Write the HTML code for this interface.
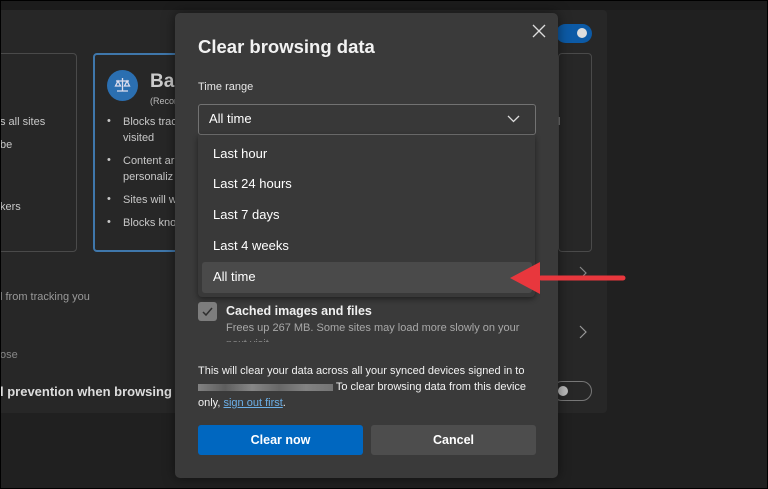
<!DOCTYPE html>
<html><head><meta charset="utf-8"><style>
*{margin:0;padding:0;box-sizing:border-box}
body{width:768px;height:489px;overflow:hidden;background:#202020;font-family:"Liberation Sans",sans-serif;position:relative;color:#fff}
.a{position:absolute;white-space:nowrap}
.frame{position:absolute;left:0;top:0;width:768px;height:489px;border:1px solid #000;pointer-events:none}
.card{position:absolute;left:0;top:10px;width:607px;height:403px;background:#272727;border-radius:0 4px 4px 0}
.g{color:#bdbdbd;font-size:11px}
.li{color:#c8c8c8;font-size:11px}
.dlg{position:absolute;left:175px;top:13px;width:383px;height:465px;background:#3a3a3a;border-radius:5px;box-shadow:0 0 12px rgba(0,0,0,.5)}
.item{position:absolute;left:15px;font-size:13px;color:#fff}
</style></head><body>
<div class="a" style="left:0;top:0;width:768px;height:10px;background:#1c1c1c"></div>
<div class="card"></div>
<div class="a" style="left:556px;top:24px;width:36px;height:19px;border-radius:10px;background:#0c5aa6"></div>
<div class="a" style="left:577px;top:28px;width:10px;height:10px;border-radius:50%;background:#ddd"></div>
<div class="a" style="left:-5px;top:53px;width:82px;height:199px;border:1px solid #4a4a4a;border-radius:4px"></div>
<div class="a" style="left:93px;top:53px;width:100px;height:199px;border:2px solid #3f77ab;border-radius:4px"></div>
<div class="a" style="left:558px;top:53px;width:34px;height:199px;border:1px solid #4a4a4a;border-radius:4px"></div>
<div class="a" style="left:107px;top:70px;width:31px;height:31px;border-radius:50%;background:#2b6fb1"></div>
<svg class="a" style="left:113px;top:76px" width="19" height="19" viewBox="0 0 19 19" fill="none" stroke="#dde" stroke-width="1.3"><path d="M9.5 2v13M4 15h11M3 5h13M5 5l-2.5 5h5zM14 5l-2.5 5h5z"/></svg>
<div class="a" style="left:150px;top:71px;font-size:19px;font-weight:bold;color:#ccc">Bal</div>
<div class="a" style="left:150px;top:96px;font-size:9px;color:#bbb">(Recor</div>
<div class="a li" style="left:107px;top:115px">•</div><div class="a li" style="left:123px;top:116px">Blocks trac</div>
<div class="a li" style="left:123px;top:132px">visited</div>
<div class="a li" style="left:107px;top:154px">•</div><div class="a li" style="left:123px;top:155px">Content ar</div>
<div class="a li" style="left:123px;top:171px">personaliz</div>
<div class="a li" style="left:107px;top:193px">•</div><div class="a li" style="left:123px;top:194px">Sites will w</div>
<div class="a li" style="left:107px;top:216px">•</div><div class="a li" style="left:123px;top:217px">Blocks kno</div>
<div class="a li" style="left:0;top:116px">s all sites</div>
<div class="a li" style="left:0;top:139px">be</div>
<div class="a li" style="left:0;top:201px">kers</div>
<div class="a li" style="left:558px;top:116px;color:#888">l</div>
<div class="a g" style="left:0;top:291px;color:#999">l from tracking you</div>
<div class="a g" style="left:0;top:349px;color:#888">ose</div>
<div class="a" style="left:0;top:384px;font-size:13px;font-weight:bold;color:#ddd">l prevention when browsing I</div>
<svg class="a" style="left:578px;top:266px" width="10" height="14"><path d="M2 1l6 6-6 6" stroke="#888" fill="none" stroke-width="1.2"/></svg>
<svg class="a" style="left:578px;top:325px" width="10" height="14"><path d="M2 1l6 6-6 6" stroke="#999" fill="none" stroke-width="1.2"/></svg>
<div class="a" style="left:552px;top:381px;width:40px;height:20px;border-radius:10px;border:1px solid #777"></div>
<div class="a" style="left:558px;top:386px;width:10px;height:10px;border-radius:50%;background:#bbb"></div>

<div class="dlg">
 <div class="a" style="left:23px;top:23px;font-size:18.5px;font-weight:bold;color:#f2f2f2">Clear browsing data</div>
 <svg class="a" style="left:357px;top:11px" width="14" height="14"><path d="M1 1l12 12M13 1L1 13" stroke="#ddd" stroke-width="1.3"/></svg>
 <div class="a" style="left:23px;top:68px;font-size:11px;color:#e6e6e6">Time range</div>
 <div class="a" style="left:23px;top:91px;width:338px;height:31px;border:1px solid #727272;border-radius:3px;background:#383838"></div>
 <div class="a" style="left:34px;top:98px;font-size:13px">All time</div>
 <svg class="a" style="left:332px;top:101px" width="13" height="9"><path d="M1 2l5.5 5.5L12 2" stroke="#ddd" fill="none" stroke-width="1.3"/></svg>
 <div class="a" style="left:23px;top:122px;width:337px;height:162px;background:#393939;box-shadow:0 2px 6px rgba(0,0,0,.45);border-radius:0 0 4px 4px">
  <div class="item" style="top:11px">Last hour</div>
  <div class="item" style="top:41px">Last 24 hours</div>
  <div class="item" style="top:72px">Last 7 days</div>
  <div class="item" style="top:103px">Last 4 weeks</div>
  <div class="a" style="left:4px;top:127px;width:330px;height:31px;background:#4a4a4a;border-radius:3px"></div>
  <div class="item" style="top:134px">All time</div>
 </div>
 <div class="a" style="left:23px;top:289px;width:19px;height:19px;border-radius:3px;background:#7d7d7d"></div>
 <svg class="a" style="left:25px;top:291px" width="15" height="15"><path d="M3 8l3 3 6-7" stroke="#2e2e2e" fill="none" stroke-width="1.5"/></svg>
 <div class="a" style="left:51px;top:291px;font-size:12.5px;font-weight:bold;color:#f0f0f0">Cached images and files</div>
 <div class="a" style="left:51px;top:309px;font-size:11px;color:#a8a8a8">Frees up 267 MB. Some sites may load more slowly on your</div>
 <div class="a" style="left:51px;top:326px;width:200px;height:3px;overflow:hidden"><div style="margin-top:-1px;font-size:11px;line-height:13px;color:#888">next visit</div></div>
 <div class="a" style="left:23px;top:350px;font-size:11px;line-height:16px;color:#f2f2f2;white-space:normal;width:345px">This will clear your data across all your synced devices signed in to<br><span style="display:inline-block;width:135px;height:7px;background:linear-gradient(90deg,#9a9a9a,#6a6a6a 20%,#a0a0a0 40%,#777 60%,#9a9a9a 80%,#888);opacity:.75;vertical-align:middle"></span> To clear browsing data from this device<br>only, <span style="color:#6cb0e8;text-decoration:underline">sign out first</span>.</div>
 <div class="a" style="left:23px;top:412px;width:165px;height:30px;background:#0067c0;border-radius:3px;font-size:12.5px;font-weight:bold;text-align:center;line-height:30px">Clear now</div>
 <div class="a" style="left:196px;top:412px;width:165px;height:30px;background:#4d4d4d;border-radius:3px;font-size:12.5px;font-weight:bold;text-align:center;line-height:30px">Cancel</div>
</div>
<svg class="a" style="left:505px;top:258px" width="125" height="40"><path d="M36 20H118" stroke="#e8373d" stroke-width="5" stroke-linecap="round"/><path d="M5 20L35 4V36Z" fill="#e8373d"/></svg>
<div class="frame"></div>
</body></html>
